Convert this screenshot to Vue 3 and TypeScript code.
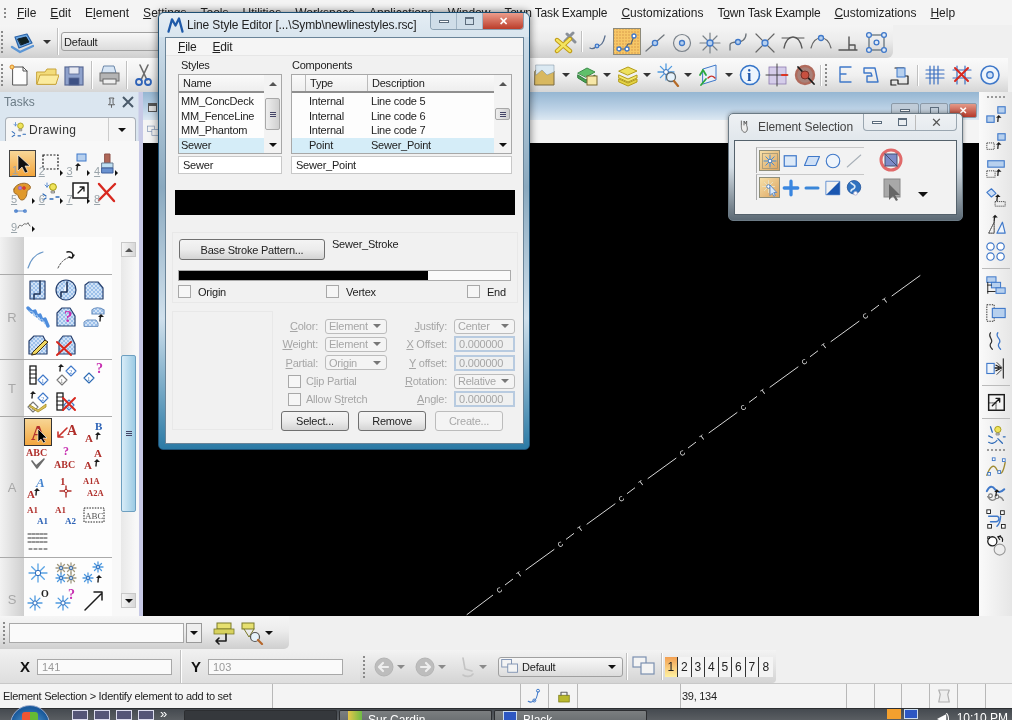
<script setup lang="ts">
type Tool = { i: string; sel?: boolean; arrow?: boolean; n?: number }

const BL = '#3f78c9'
const LB = '#b7d0ee'
const DK = '#1c1c1c'
const P = (d: string, c = BL, w = 1.3, f = 'none') => `<path d="${d}" fill="${f}" stroke="${c}" stroke-width="${w}" stroke-linejoin="round" stroke-linecap="round"/>`
const C = (x: number, y: number, r: number, c = BL, f = 'none', w = 1.3) => `<circle cx="${x}" cy="${y}" r="${r}" fill="${f}" stroke="${c}" stroke-width="${w}"/>`
const R = (x: number, y: number, w: number, h: number, c = BL, f = 'none', sw = 1.2, dash = '') => `<rect x="${x}" y="${y}" width="${w}" height="${h}" fill="${f}" stroke="${c}" stroke-width="${sw}" stroke-dasharray="${dash}"/>`
const T = (x: number, y: number, s: string, size = 10, c = '#b0302c', weight = 'bold') => `<text x="${x}" y="${y}" font-family="Liberation Serif, serif" font-size="${size}" font-weight="${weight}" fill="${c}">${s}</text>`
const UP = (x: number, y: number) => P(`M${x} ${y + 6}c0-3 0-4 1-5`, DK, 1.4) + `<path d="M${x - 2} ${y + 2}l3-3 3 3z" fill="${DK}"/>`
const STAR = (x: number, y: number, r: number, c = '#4f9ae0') => {
  const a = r * 0.7
  return P(`M${x - r} ${y}H${x + r}M${x} ${y - r}V${y + r}M${x - a} ${y - a}L${x + a} ${y + a}M${x - a} ${y + a}L${x + a} ${y - a}`, c, 1.3) + C(x, y, r * 0.3, '#2d6ab8', '#fff', 1)
}
const HDEF = '<defs><pattern id="hx" width="4" height="4" patternUnits="userSpaceOnUse"><rect width="4" height="4" fill="#9cc0ea"/><path d="M0 0l4 4M4 0L0 4" stroke="#e8f1fb" stroke-width=".7"/></pattern></defs>'
const HATCH = (d: string, c = '#27406e') => HDEF + P(d, c, 1.2, 'url(#hx)')
const XR = (x: number, y: number, s: number) => P(`M${x} ${y}l${s} ${s}M${x + s} ${y}l${-s} ${s}`, '#d8281f', 2)
const BULB = (x: number, y: number) => C(x, y, 3.4, '#a59a14', '#efe35a', 1) + P(`M${x - 1.5} ${y + 4}h3v2h-3z`, '#777', 0.8, '#ccc')
const TAG = (x: number, y: number, s: string, c = '#777') => P(`M${x} ${y}l5-5 5 5-5 5z`, c, 1.1, '#fff') + T(x + 3.2, y + 3, s, 6, c, 'normal')
const DASHED = (p: string, d: string) => p.replace('/>', ` stroke-dasharray="${d}"/>`)

const I: Record<string, string> = {
  monitor: P('M5 7l12-3 5 9-13 5z', '#2b63a8', 1.2, '#6ba7e0') + P('M8 9l8-2 3 5-8 3z', '#0f1d2c', 1, '#122') + P('M2 17l8 5 13-6', '#5d97d6', 2.4),
  newdoc: P('M6 4h10l4 4v14H6z', '#555', 1, '#fdfdfd') + P('M16 4v4h4', '#555', 1) + C(5, 4, 2, '#e08b2a', '#f8d06a', 1),
  folder: P('M2 9h8l2-3h9v15H2z', '#c8a43c', 1, '#f3dc7a') + P('M2 21l3-9h19l-3 9z', '#c8a43c', 1, '#fbeb9e'),
  save: R(3, 4, 18, 18, '#5a6a95', '#8fa2cc', 1.2) + R(7, 4, 10, 7, '#5a6a95', '#e8eaf2', 0.8) + R(7, 15, 10, 7, '#5a6a95', '#3e5184', 0.8),
  print: P('M7 3h10l2 7H5z', '#6a86a8', 1, '#d7e5f4') + R(3, 10, 19, 8, '#707070', '#b4b4b4', 1) + R(6, 16, 13, 5, '#666', '#eee', 1),
  scissors: P('M8 2l7 15M16 2L9 17', '#6a6a6a', 1.6) + C(7, 19, 3, '#2f63b8', 'none', 1.8) + C(16, 19, 3, '#2f63b8', 'none', 1.8),
  yx: P('M14 4l8 8M20 3l-8 8', '#8a9098', 3) + P('M4 10l13 11M17 9L4 21', '#c09a14', 4.4) + P('M4 10l13 11M17 9L4 21', '#f4e45e', 2.4),
  s1: P('M3 18c3 2 5 0 7-2 3 0 6-1 8-10', '#5a6f8e') + C(10, 16, 1.8, BL, LB),
  s2: P('M4 19h6l3-5h3l3-8', '#55606c', 1.2) + C(4, 19, 2, BL, '#fff') + C(12, 19, 2, BL, '#fff') + C(19, 6, 2, BL, '#fff'),
  s3: P('M3 21L21 5', '#70767c', 1.3) + C(12, 13, 2.6, BL, LB),
  s4: C(12, 13, 8.5, '#7b838b', 'none', 1.2) + C(12, 13, 2.5, BL, LB),
  s5: P('M12 3v20M2 13h20M5 6l14 14M5 20L19 6', '#7a8288', 1.2) + C(12, 13, 3, BL, LB),
  s6: P('M4 20v-5c0-3 5-3 8-3s8-2 8-8', '#6d747a', 1.3) + C(12, 12, 2.5, BL, LB),
  s7: P('M3 4l18 18M21 4L3 22', '#666', 1.2) + C(12, 13, 3, BL, LB),
  s8: P('M3 18c2-9 5-11 9-11s7 2 9 11', '#555', 1.3) + P('M1 8h8', '#555', 1) + P('M15 8h8', '#555', 1),
  s9: P('M2 18c2-8 6-10 10-10s8 2 10 10', '#666', 1.2) + C(12, 8, 2.5, BL, LB),
  s10: P('M3 20h18M13 20V7M13 15h6v5', '#555', 1.4),
  s11: R(5, 5, 15, 15, '#5a6a75', 'none', 1.2) + C(5, 5, 2.4, BL, '#dfeaf8') + C(20, 5, 2.4, BL, '#dfeaf8') + C(5, 20, 2.4, BL, '#dfeaf8') + C(20, 20, 2.4, BL, '#dfeaf8') + C(12.5, 12.5, 2.4, BL, '#dfeaf8'),
  map: P('M1 8c4-5 14-5 19 0v14H1z', '#7a6a40', 1, '#d8b860') + P('M2 12l6-5 5 5 7-3V2H2z', '#789', 0.5, '#dbe9f2'),
  lvl: P('M3 10l9-5 8 4-9 5z', '#3d8c4a', 1, '#5fc06a') + P('M3 12l8 5 9-5v3l-9 5-8-5z', '#2e7a3c', 1, '#46a050') + R(12, 13, 10, 9, '#7a6a30', '#f6e7a8', 1),
  layers: P('M3 8l9-4 9 4-9 4z', '#b49c16', 1, '#eee05c') + P('M3 12l9 4 9-4v3l-9 4-9-4z', '#b49c16', 1, '#f3e76c') + P('M3 16l9 4 9-4v3l-9 4-9-4z', '#b49c16', 1, '#e3d244'),
  find: STAR(10, 9, 8) + C(15, 14, 4.5, '#5d6a72', '#e6f2fb', 1.3) + P('M18 18l4 5', '#b56a28', 2.2),
  refm: P('M6 6l13-4v15L6 21z', '#3f78c9', 1, '#e9f1fa') + P('M3 12l3-5 3 5M4 22l5-6', '#2ba83f', 1.8) + P('M11 15c3-3 5-2 7 0', '#c8322c', 1.5),
  info: C(12, 12, 9.5, '#3474c8', '#eef5fd', 1.6) + T(9, 18, 'i', 16, '#1f57ab', 'bold'),
  plus: R(4, 4, 17, 17, '#8d7ab0', '#d5cdea', 0.8) + P('M12 1v22M1 12h22', '#333', 0.9, 'none') + P('M17 12h5', '#d32', 2),
  noc: C(12, 12, 9, '#b06a5c', '#a88078', 2.4) + P('M5 4l16 17', DK, 1.8) + C(12, 12, 4, '#7a3028', '#c85040', 1),
  w1: P('M7 4h11M7 4v7h6M7 11v8h11', '#3f78c9', 1.4),
  w2: P('M4 5h11l3 14H7v-6h5l-1-3H4z', '#3f78c9', 1.4),
  w3: P('M7 5h9v8h4v8H10v-4H3v5h5', DK, 1.2) + R(9, 5, 8, 9, BL, LB, 1),
  grid: P('M7 3v18M15 3v18M3 7h18M3 15h18M11 3v18M3 11h18', '#3a6fc0', 1.2),
  gridx: P('M7 3v18M15 3v18M3 7h18M3 15h18', '#3a6fc0', 1.2) + XR(5, 5, 13),
  ring: C(12, 12, 9, BL, '#eef4fb', 1.6) + C(12, 12, 3.2, BL, '#cfe0f6', 1.4),
  arrowS: `<path d="M7 3v16l4-4 3 6 3-1-3-6h5z" fill="#111" stroke="#fff" stroke-width=".6"/>`,
  dash: R(5, 3, 15, 14, DK, 'none', 1.2, '2 1.5'),
  t3: R(11, 2, 9, 7, BL, LB, 1) + UP(11, 12),
  t4: P('M11 2h5v9h-5z', '#8d5048', 1, '#b06858') + P('M8 11h11v5H8z', '#6b7d92', 1, '#bfe0f3') + P('M8 16h11v5H8z', '#3c5e9c', 1, '#6a92d0'),
  t5: P('M3 9c2-6 13-8 16-3 2 4-3 3-3 6 0 4-2 8-5 8-4 0-3-6-6-6-1 0-3-2-2-5z', '#9c6a2a', 1, '#e0992c') + C(9, 8, 1.8, '#8a5ac0', '#b07fe0', 0.6) + C(13, 8, 1.5, '#c8322c', '#e0402f', 0.6),
  t6: BULB(15, 7) + P('M9 3v4M9 7l-2-2M9 7l2-2', '#5b8cd0', 1) + P('M5 14l3 2M5 20l3-2M18 17h3M12 19h3', '#2f6bb8', 1.3, 'none'),
  t7: R(7, 3, 15, 15, DK, '#fff', 1.5) + P('M12 13l6-6M14 7h4v4', DK, 1.3),
  redx: P('M5 4l15 17M21 4L5 20', '#d8281f', 2.4),
  t9: P('M5 3h8', '#5a8cd0', 1, 'none') + C(5, 3, 1.2) + C(14, 3, 1.2) + P('M7 20c2-6 3 0 5-3s3 1 5-2M17 15l2 3', '#666', 1),
  c1: P('M2 20C5 10 10 6 17 4', '#6a98c8', 1.2),
  c2: DASHED(P('M4 20c3-6 6-9 12-11', '#555', 1, 'none'), '2 1.5') + P('M13 4c5-1 7 2 5 6M18 10l-3-1M18 10l2-3', DK, 1.4),
  r1: HATCH('M4 3h15v18H4z') + P('M14 3v13H8v5', '#1e3358', 1.5),
  r2: HDEF + C(12, 12, 10, '#27406e', 'url(#hx)', 1.2) + P('M13 4v10H7v5', '#1e3358', 1.6, '#f4f8fd'),
  r3: HATCH('M3 21V7l4-3h9l5 6v11z'),
  r4: P('M2 3l4 4 3-1 2 5 3-1 2 5 3-1 3 7', '#4e8ddd', 3.3) + P('M3 6l4 1 1 4 3-1 2 5 3-1 3 5', '#9dc4ef', 1),
  r5: HATCH('M3 21V8l5-5h8l5 8v10z') + T(10, 17, '?', 17, '#c72fb1'),
  r6: HATCH('M10 5c2-3 8-3 12 0v4H10z', '#6a90c0') + P('M2 21v-4l3-2h9l2 3v3z', '#6a90c0', 1, 'url(#hx)') + UP(18, 10),
  r7: HATCH('M3 21V8l5-5h9l4 8v10z') + P('M7 19l12-12 3 2-12 12-4 1z', '#3b2a10', 1, '#f0d860'),
  r8: HATCH('M5 21V8l4-5h8l4 8v10z') + P('M3 9l14 13M17 9L3 22', '#d8281f', 2),
  d1: R(4, 3, 6, 18, DK, '#fff', 1.3) + P('M4 7h6M4 11h6M4 15h6', DK, 1) + TAG(12, 17, '1', '#3f78c9'),
  d2: TAG(3, 17, '1') + TAG(12, 8, '2', '#3f78c9') + UP(6, 2),
  d3: TAG(2, 15, '1', '#2c6ab3') + T(14, 10, '?', 14, '#c72fb1'),
  d4: TAG(2, 17, '1') + TAG(12, 8, '2', '#3f78c9') + P('M4 15l8 5 8-6v3l-8 5-8-5z', '#a08a20', 0.8, '#e0c25a') + UP(6, 2),
  d5: R(3, 3, 6, 17, DK, '#fff', 1.3) + P('M3 7h6M3 11h6M3 15h6', DK, 1) + TAG(10, 15, '1', '#3f78c9') + XR(9, 8, 12),
  a1: T(5, 20, 'A', 20, '#b0302c') + `<path d="M12 9v13l3-3 2.5 4 2-1-2.5-4h4z" fill="#000" stroke="#fff" stroke-width=".6"/>`,
  a2: P('M13 8l-9 9M4 12v5h5', '#c8322c', 1.6) + T(13, 15, 'A', 14),
  a3: T(3, 22, 'A', 11) + T(13, 10, 'B', 11, '#2c62b6') + UP(15, 13),
  a4: T(0, 9, 'ABC', 10) + P('M6 14l4 5 8-7-7 9z', '#6c6c6c', 1.6, '#888'),
  a5: T(9, 8, '?', 12, '#c72fb1') + T(0, 21, 'ABC', 10),
  a6: T(2, 22, 'A', 11) + T(12, 10, 'A', 11) + UP(14, 13),
  a7: T(1, 23, 'A', 11) + `<text x="10" y="12" font-family="Liberation Serif, serif" font-size="13" font-style="italic" font-weight="bold" fill="#4584cf">A</text>` + UP(10, 14),
  a8: T(6, 10, '1', 11) + P('M12 11v11M6 16h11', '#b0302c', 1.4) + C(12, 16, 1.6, '#b0302c', '#fff', 1),
  a9: T(1, 9, 'A1A', 8.5) + T(5, 21, 'A2A', 8.5),
  a10: T(1, 10, 'A1', 9) + T(11, 21, 'A1', 9, '#2c62b6'),
  a11: T(1, 10, 'A1', 9) + T(11, 21, 'A2', 9, '#2c62b6'),
  a12: R(2, 5, 20, 14, DK, 'none', 1, '1.5 1.2') + T(3, 16, 'ABC', 9, '#555', 'normal'),
  a13: DASHED(P('M2 4h20M2 8h20M2 12h20', '#333', 1), '3 1') + DASHED(P('M3 19h18', '#333', 1), '3 2'),
  e1: STAR(12, 12, 9, '#59a3e4'),
  e2: STAR(7, 7, 5, '#a39a80') + STAR(17, 7, 5, '#a39a80') + STAR(7, 17, 5, '#4f9ae0') + STAR(17, 17, 5, '#a09a80'),
  e3: STAR(16, 6, 5) + STAR(6, 17, 5) + UP(16, 15),
  e4: STAR(9, 15, 7) + T(15, 9, 'O', 10, '#222'),
  e5: STAR(9, 15, 7) + T(14, 11, '?', 14, '#c72fb1'),
  e6: P('M3 22L19 6M12 4h8v8', DK, 1.5),
  cm1: R(14, 3, 8, 7, BL, LB, 1.2) + R(2, 13, 8, 7, BL, LB, 1.2) + UP(14, 13),
  cm2: R(14, 3, 8, 7, BL, LB, 1.2) + R(2, 13, 8, 7, DK, 'none', 0.9, '1.2 1') + UP(14, 13),
  cm3: R(3, 3, 18, 7, BL, LB, 1.2) + R(2, 14, 9, 7, DK, 'none', 0.9, '1.2 1') + UP(14, 13),
  cm4: P('M2 7l5-4 5 5-5 4z', BL, 1.2, '#cfe0f6') + UP(13, 10) + R(11, 17, 11, 5, DK, 'none', 0.9, '1.2 1'),
  cm5: DASHED(P('M4 22l6-12v12z', DK, 0.9), '1.5 1') + P('M13 22l6-12 3 12z', BL, 1.3, '#eef4fb') + UP(10, 3),
  cm6: C(6, 6, 4, BL, '#fff') + C(17, 6, 4, BL, '#fff') + C(6, 17, 4, BL, '#fff') + C(17, 17, 4, BL, '#fff'),
  cm7: R(2, 2, 10, 6, BL, LB, 1.1) + R(7, 8, 10, 6, BL, LB, 1.1) + R(12, 14, 10, 6, BL, LB, 1.1) + P('M3 11h4M3 18h8M3 8v12', DK, 1),
  cm8: R(2, 3, 8, 18, DK, 'none', 1, '1.5 1.2') + R(8, 7, 14, 10, BL, LB, 1.2),
  cm9: P('M6 3c-4 5 5 7 0 12-1 2 0 4 2 6', '#333', 1.3) + P('M14 3c-4 5 6 7 1 12-1 2 0 4 2 6', BL, 1.4),
  cm10: R(2, 7, 8, 11, BL, '#eef4fb', 1.2) + P('M20 2v21', '#333', 1.3) + P('M11 12h4M12 9l6 3-6 3', DK, 1.4) + P('M13 6l5 5M13 19l5-5', '#333', 1),
  cm11: R(4, 4, 17, 17, DK, '#f4f4f4', 1.6) + P('M8 16l7-7M12 8h4v4', DK, 1.5) + DASHED(P('M4 13h8v8', DK, 0.8), '1 1'),
  cm12: BULB(14, 6) + P('M6 3l2 6M4 13l4 2M4 20c3 2 7 1 9-2M14 16l5 5M20 14h2', '#2f6bb8', 1.4),
  cm13: P('M2 21c3-8 7-14 11-6s7 3 9-8', '#a08a30', 1.5) + R(3, 18, 3, 3, BL, '#fff', 1) + R(8, 2, 3, 3, BL, '#fff', 1) + R(14, 16, 3, 3, BL, '#fff', 1) + R(19, 3, 3, 3, BL, '#fff', 1),
  cm14: P('M2 10c3-6 6-6 9-2s6 4 10 0', BL, 2.2) + P('M3 16c3 5 6 5 9 2s6-2 8 2', '#888', 1.6) + C(6, 15, 2, '#777', '#fff') + C(13, 16, 2, '#777', '#fff') + UP(12, 9),
  cm15: R(2, 2, 4, 4, DK, '#fff', 1) + R(17, 3, 4, 4, DK, '#fff', 1) + R(3, 18, 4, 4, DK, '#fff', 1) + R(18, 18, 4, 4, DK, '#fff', 1) + P('M4 9h9c3 0 3 6-1 6H6M17 9c0 4-2 9-4 11', BL, 1.5),
  cm16: C(8, 8, 5, DK, '#fff', 1.4) + C(16, 17, 6, '#999', '#ededed', 1.2) + P('M14 3c4-1 6 2 5 5M14 3l3-1M14 3l2 3', DK, 1.3) + R(3, 3, 2, 2, DK, '#fff', 1),
  fence: R(5, 2, 14, 6, '#7a7a28', '#e6e070', 1) + R(2, 8, 20, 5, '#7a7a28', '#d8d25e', 0.8) + P('M4 20h10M4 20l3-3M4 20l3 3M14 13v7', DK, 1.6),
  fenceq: R(2, 2, 12, 6, '#7a7a28', '#e6e070', 1) + P('M4 8l5 8 5-8', '#7a7a28', 1) + C(15, 16, 4.5, '#555', '#e6f2fb', 1.2) + P('M18 19l4 4', '#b5662a', 2.2),
  back: C(12, 12, 9, '#b4b4b4', '#bdbdbd', 1) + P('M16 12H8M11 8l-4 4 4 4', '#eee', 2.2),
  fwd: C(12, 12, 9, '#b4b4b4', '#bdbdbd', 1) + P('M8 12h8M13 8l4 4-4 4', '#eee', 2.2),
  cam: P('M9 3l2 11M9 20c3 2 8 2 10-1M11 14l7 2', '#c4c4c4', 1.6),
  views: R(1, 2, 13, 10, '#7b8fb0', '#f4f4f4', 1.2) + R(9, 8, 13, 11, '#7b8fb0', '#f4f4f4', 1.2),
  sel1: R(2, 2, 20, 20, '#9c9274', 'none', 1) + STAR(12, 12, 8, '#3f8bdc'),
  rect: R(3, 5, 16, 14, BL, '#dce9f8', 1.6),
  para: P('M7 6h15l-5 12H2z', BL, 1.5, '#cfe0f6'),
  circ: C(12, 12, 9, BL, '#eef4fb', 1.5),
  ln: P('M3 20L21 4', '#a8b0b8', 1.4),
  sel2: STAR(10, 10, 8, '#e8e0c0') + `<path d="M12 8v14l3-3 2 4 2-1-2-4h4z" fill="#dcebfa" stroke="#3f78c9"/>`,
  pl: P('M12 3v18M3 12h18', '#3a86e0', 4.4),
  mi: P('M4 12h16', '#3a86d8', 4),
  half: P('M3 3h18v18H3z', BL, 1) + `<path d="M21 3v18H3z" fill="#1a56b0"/>`,
  globe: C(12, 11, 9, '#1f4f96', '#2f72c0', 1) + P('M8 5c2 3 6 2 5 6s-4 1-5 5', '#d8e8f6', 2.2) + C(14, 19, 2.5, '#aac', '#fff', 1),
  nosel: C(12, 12, 10, '#e06a6a', 'none', 3) + R(6, 6, 12, 12, '#454e70', '#7d8cc8', 1) + P('M6 6l12 12', '#454e70', 1),
  grey: R(5, 1, 16, 18, '#888', '#a8a8a8', 1) + `<path d="M10 6v16l4-4 3 5 2-1-3-5h5z" fill="#666"/>`,
  wrench: P('M8 3v7c0 3 0 9 5 10 4 0 5-6 3-10V3l-2 4-2-4v6', '#555', 1.3, '#eee'),
  ms: P('M4 19l4-14 4 7 4-8 4 15', '#1f5aa8', 2.6),
  lockp: R(5, 11, 14, 9, '#7a7a10', '#b9b82e', 1) + P('M8 11V7h8v4', '#666', 1.6),
  snapst: P('M3 19c3 2 6 1 8-1 3-1 4-6 5-12', BL, 1.4) + C(11, 18, 2, BL) + C(16, 5, 2, BL),
  mapd: P('M5 4h14l-2 6 2 10H5l2-10z', '#b0b0b0', 1.6, '#eee'),
}

const row1Right: Tool[] = [
  { i: 'yx' }, { i: 's1' }, { i: 's2', sel: true }, { i: 's3' }, { i: 's4' }, { i: 's5' }, { i: 's6' }, { i: 's7' }, { i: 's8' }, { i: 's9' }, { i: 's10' }, { i: 's11' },
]
const row2Left: Tool[] = [{ i: 'newdoc' }, { i: 'folder' }, { i: 'save' }, { i: 'print' }, { i: 'scissors' }]
const row2A: Tool[] = [
  { i: 'map', arrow: true }, { i: 'lvl', arrow: true }, { i: 'layers', arrow: true }, { i: 'find', arrow: true }, { i: 'refm', arrow: true },
  { i: 'info' }, { i: 'plus' }, { i: 'noc' },
]
const row2B = ['w1', 'w2', 'w3']
const row2C = ['grid', 'gridx', 'ring']

const topTools: Tool[] = [
  { i: 'arrowS', n: 1, sel: true }, { i: 'dash', n: 2, arrow: true }, { i: 't3', n: 3, arrow: true }, { i: 't4', n: 4, arrow: true },
  { i: 't5', n: 5, arrow: true }, { i: 't6', n: 6, arrow: true }, { i: 't7', n: 7, arrow: true }, { i: 'redx', n: 8 },
  { i: 't9', n: 9, arrow: true },
]
const sections = [
  { k: 'first', l: '', items: ['c1', 'c2'] },
  { k: 'r', l: 'R', items: ['r1', 'r2', 'r3', 'r4', 'r5', 'r6', 'r7', 'r8'] },
  { k: 't', l: 'T', items: ['d1', 'd2', 'd3', 'd4', 'd5'] },
  { k: 'a', l: 'A', items: ['a1', 'a2', 'a3', 'a4', 'a5', 'a6', 'a7', 'a8', 'a9', 'a10', 'a11', 'a12', 'a13'] },
  { k: 's', l: 'S', items: ['e1', 'e2', 'e3', 'e4', 'e5', 'e6'] },
]
const rightA = ['cm1', 'cm2', 'cm3', 'cm4', 'cm5', 'cm6']
const rightB = ['cm7', 'cm8', 'cm9', 'cm10']
const rightC = ['cm13', 'cm14', 'cm15', 'cm16']

const styleRows = ['MM_ConcDeck', 'MM_FenceLine', 'MM_Phantom', 'Sewer']
const compRows = [
  ['Internal', 'Line code 5'], ['Internal', 'Line code 6'], ['Internal', 'Line code 7'], ['Point', 'Sewer_Point'],
]
const pages = [1, 2, 3, 4, 5, 6, 7, 8]

const ANGLE = -37.3
const DX = 61
const DY = 45.65
const line = Array.from({ length: 7 }, (_, i) => ({
  i,
  dash: { x1: 505 + DX * i, y1: 585 - DY * i, x2: 513 + DX * i, y2: 579 - DY * i },
  seg: { x1: 525.7 + DX * i, y1: 570 - DY * i, x2: 554.3 + DX * i, y2: 549.3 - DY * i },
  cx: 499.3 + DX * i,
  cy: 590 - DY * i,
  tx: 519.3 + DX * i,
  ty: 574.3 - DY * i,
}))
</script>

<template>
  <div class="app">
    <nav class="menubar">
      <span class="grip short" />
      <span class="mi m-a"><u>F</u>ile</span>
      <span class="mi"><u>E</u>dit</span>
      <span class="mi">E<u>l</u>ement</span>
      <span class="mi"><u>S</u>ettings</span>
      <span class="mi"><u>T</u>ools</span>
      <span class="mi"><u>U</u>tilities</span>
      <span class="mi"><u>W</u>orkspace</span>
      <span class="mi"><u>A</u>pplications</span>
      <span class="mi"><u>W</u>indow</span>
      <span class="mi town">T<u>o</u>wn Task Example</span>
      <span class="mi"><u>C</u>ustomizations</span>
      <span class="mi town">T<u>o</u>wn Task Example</span>
      <span class="mi"><u>C</u>ustomizations</span>
      <span class="mi"><u>H</u>elp</span>
    </nav>

    <div class="bar bar1">
      <span class="grip" />
      <svg class="ic big" viewBox="0 0 24 24" v-html="I.monitor" />
      <span class="tri tri-l" />
      <span class="sep sep-l" />
      <div class="combo wide">Default</div>
      <div class="bar-right">
        <template v-for="(t, idx) in row1Right" :key="t.i">
          <span v-if="idx === 1" class="sep" />
          <span class="cell" :class="{ sel: t.sel }"><svg class="ic" viewBox="0 0 24 24" v-html="I[t.i]" /></span>
        </template>
      </div>
    </div>

    <div class="bar bar2">
      <span class="grip" />
      <template v-for="(t, idx) in row2Left" :key="t.i">
        <span v-if="idx === 3 || idx === 4" class="sep" />
        <span class="cell"><svg class="ic" viewBox="0 0 24 24" v-html="I[t.i]" /></span>
      </template>
      <div class="bar-right r2">
        <template v-for="t in row2A" :key="t.i">
          <span class="cell"><svg class="ic" viewBox="0 0 24 24" v-html="I[t.i]" /></span>
          <span v-if="t.arrow" class="tri" />
        </template>
        <span class="sep gapl" />
        <span class="grip" />
        <span v-for="n in row2B" :key="n" class="cell"><svg class="ic" viewBox="0 0 24 24" v-html="I[n]" /></span>
        <span class="sep" />
        <span v-for="n in row2C" :key="n" class="cell"><svg class="ic" viewBox="0 0 24 24" v-html="I[n]" /></span>
      </div>
    </div>

    <main class="middle">
      <aside class="tasks">
        <header class="tasks-head">
          <span>Tasks</span>
          <span class="pin">
            <svg viewBox="0 0 12 14" class="pin-ic"><path d="M3 1h6v1H8v6l2 2H2l2-2V2H3zM6 10v4" fill="none" stroke="#555" stroke-width="1.2" /></svg>
            <svg viewBox="0 0 12 12" class="pin-ic x"><path d="M1 1l10 10M11 1L1 11" stroke="#4a5a6a" stroke-width="2" /></svg>
          </span>
        </header>
        <div class="task-tab">
          <svg class="ic sm" viewBox="0 0 24 24" v-html="I.t6" />
          <span class="tab-label">Drawing</span>
          <span class="tab-drop"><span class="tri dark" /></span>
        </div>
        <div class="task-body">
          <div class="top-grid">
            <span v-for="t in topTools" :key="t.n" class="tcell" :class="{ tsel: t.sel }">
              <svg class="ic" viewBox="0 0 24 24" v-html="I[t.i]" />
              <span class="num">{{ t.n }}</span>
              <span v-if="t.arrow" class="corner" />
            </span>
          </div>
          <div class="scroll-wrap">
            <div class="sections">
              <section v-for="s in sections" :key="s.k" class="sec" :class="'sec-' + s.k">
                <span class="letter">{{ s.l }}</span>
                <div class="sec-grid">
                  <span v-for="n in s.items" :key="n" class="scell" :class="{ scur: n === 'a1' }"><svg class="ic" viewBox="0 0 24 24" v-html="I[n]" /></span>
                </div>
              </section>
            </div>
            <div class="vscroll">
              <span class="sb-btn"><span class="tri up" /></span>
              <span class="sb-track"><span class="sb-thumb"><i /><i /><i /></span></span>
              <span class="sb-btn"><span class="tri dark" /></span>
            </div>
          </div>
        </div>
      </aside>

      <section class="view">
        <div class="view-title">
          <span class="doc-ic" />
          <span class="win-btns">
            <span class="wb"><span class="wmin" /></span>
            <span class="wb"><span class="wrest" /></span>
            <span class="wb closer">✕</span>
          </span>
        </div>
        <div class="view-band"><svg class="band-ic" viewBox="0 0 24 24" v-html="I.views" /></div>
        <div class="canvas">
          <svg class="cad" viewBox="143 143 836 473" width="836" height="473">
            <g stroke="#eee" stroke-width="0.9">
              <line x1="466.7" y1="614.8" x2="493" y2="595" />
              <template v-for="s in line" :key="s.i">
                <line v-bind="s.dash" />
                <line v-bind="s.seg" />
              </template>
            </g>
            <g fill="#eee" font-family="Liberation Sans, sans-serif" font-size="7">
              <template v-for="s in line" :key="s.i">
                <text :x="s.cx" :y="s.cy + 2.5" text-anchor="middle" :transform="`rotate(${ANGLE} ${s.cx} ${s.cy})`">C</text>
                <text :x="s.tx" :y="s.ty + 2.5" text-anchor="middle" :transform="`rotate(${ANGLE} ${s.tx} ${s.ty})`">T</text>
              </template>
            </g>
          </svg>
        </div>

        <div class="es-win">
          <div class="es-title">
            <svg class="ic es-ic" viewBox="0 0 24 24" v-html="I.wrench" />
            <span class="es-name">Element Selection</span>
            <span class="es-btns"><b class="wmin" /><b class="wrest small" /><em>✕</em></span>
          </div>
          <div class="es-body">
            <div class="es-rows">
              <div class="es-row">
                <span class="cell es sel"><svg class="ic" viewBox="0 0 24 24" v-html="I.sel1" /></span>
                <span v-for="n in ['rect', 'para', 'circ', 'ln']" :key="n" class="cell es"><svg class="ic" viewBox="0 0 24 24" v-html="I[n]" /></span>
              </div>
              <div class="es-row">
                <span class="cell es sel"><svg class="ic" viewBox="0 0 24 24" v-html="I.sel2" /></span>
                <span v-for="n in ['pl', 'mi', 'half', 'globe']" :key="n" class="cell es"><svg class="ic" viewBox="0 0 24 24" v-html="I[n]" /></span>
              </div>
            </div>
            <div class="es-side">
              <svg class="ic" viewBox="0 0 24 24" v-html="I.nosel" />
              <svg class="ic" viewBox="0 0 24 24" v-html="I.grey" />
            </div>
            <span class="tri dark es-tri" />
          </div>
        </div>
      </section>

      <aside class="rightbar">
        <span class="hgrip" />
        <span v-for="n in rightA" :key="n" class="rcell"><svg class="ic" viewBox="0 0 24 24" v-html="I[n]" /></span>
        <span class="hsep" />
        <span v-for="n in rightB" :key="n" class="rcell"><svg class="ic" viewBox="0 0 24 24" v-html="I[n]" /></span>
        <span class="hsep" />
        <span class="rcell c"><svg class="ic" viewBox="0 0 24 24" v-html="I.cm11" /></span>
        <span class="hsep" />
        <span class="rcell c"><svg class="ic" viewBox="0 0 24 24" v-html="I.cm12" /></span>
        <span class="hgrip" />
        <span v-for="n in rightC" :key="n" class="rcell c"><svg class="ic" viewBox="0 0 24 24" v-html="I[n]" /></span>
      </aside>
    </main>

    <div class="lower">
      <div class="bar keyin">
        <span class="grip" />
        <div class="field key" />
        <span class="drop"><span class="tri dark" /></span>
        <span class="cell"><svg class="ic" viewBox="0 0 24 24" v-html="I.fence" /></span>
        <span class="cell"><svg class="ic" viewBox="0 0 24 24" v-html="I.fenceq" /></span>
        <span class="tri dark" />
      </div>
    </div>

    <div class="coords">
      <div class="xy">
        <b>X</b><div class="field co">141</div>
        <span class="sep tall" />
        <b class="yl">Y</b><div class="field co">103</div>
      </div>
      <div class="bar navs">
        <span class="grip" />
        <span class="cell narrow"><svg class="ic" viewBox="0 0 24 24" v-html="I.back" /></span><span class="tri pale" />
        <span class="cell narrow"><svg class="ic" viewBox="0 0 24 24" v-html="I.fwd" /></span><span class="tri pale" />
        <span class="cell narrow"><svg class="ic" viewBox="0 0 24 24" v-html="I.cam" /></span><span class="tri pale" />
        <div class="combo vw">
          <svg class="ic tiny" viewBox="0 0 24 24" v-html="I.views" />
          <span>Default</span>
          <span class="tri dark end" />
        </div>
        <span class="sep" />
        <span class="cell"><svg class="ic" viewBox="0 0 24 24" v-html="I.views" /></span>
        <span class="sep" />
        <span class="pages"><span v-for="p in pages" :key="p" class="pg" :class="{ on: p === 1 }">{{ p }}</span></span>
      </div>
    </div>

    <footer class="status">
      <span class="st msg">Element Selection &gt; Identify element to add to set</span>
      <span class="st w248" />
      <span class="st w28"><svg class="ic xs" viewBox="0 0 24 24" v-html="I.snapst" /></span>
      <span class="st w29"><svg class="ic xs" viewBox="0 0 24 24" v-html="I.lockp" /></span>
      <span class="st w103" />
      <span class="st w166">39, 134</span>
      <span class="st w28" /><span class="st w27" /><span class="st w28" />
      <span class="st w28"><svg class="ic xs" viewBox="0 0 24 24" v-html="I.mapd" /></span>
      <span class="st w28" /><span class="st w27" />
    </footer>

    <div class="taskbar">
      <span class="orb"><span class="flag" /></span>
      <span class="ql" />
      <span class="ql" />
      <span class="ql" />
      <span class="ql" />
      <span class="chev">»</span>
      <span class="tb dark" />
      <span class="tb"><span class="tb-ic green" />Sur Cardin</span>
      <span class="tb"><span class="tb-ic blue" />Black</span>
      <span class="tray"><span class="tb-ic orange" /><span class="tb-ic blue" /><span class="vol">◀)</span><span>10:10 PM</span></span>
    </div>

    <div class="lse">
      <div class="lse-title">
        <svg class="ic logo" viewBox="0 0 24 24" v-html="I.ms" />
        <span class="lse-name">Line Style Editor [...\Symb\newlinestyles.rsc]</span>
        <span class="caption">
          <span class="cap"><span class="wmin" /></span>
          <span class="cap"><span class="wrest small" /></span>
          <span class="cap red">✕</span>
        </span>
      </div>
      <div class="lse-body">
        <div class="lse-menu"><span><u>F</u>ile</span><span><u>E</u>dit</span></div>

        <div class="lists">
          <div class="gcol styles">
            <span class="legend">Styles</span>
            <div class="listbox">
              <div class="lb-main">
                <div class="lb-head"><span class="h-name">Name</span></div>
                <div v-for="r in styleRows" :key="r" class="lb-row" :class="{ cur: r === 'Sewer' }">{{ r }}</div>
              </div>
              <div class="lb-sb">
                <span class="sb-btn s"><span class="tri up" /></span>
                <span class="sb-track s"><span class="sb-thumb gr"><i /><i /><i /></span></span>
                <span class="sb-btn s"><span class="tri dark" /></span>
              </div>
            </div>
            <div class="field tf">Sewer</div>
          </div>
          <div class="gcol comps">
            <span class="legend">Components</span>
            <div class="listbox">
              <div class="lb-main">
                <div class="lb-head cols"><span class="h0" /><span class="h1">Type</span><span class="h2">Description</span></div>
                <div v-for="r in compRows" :key="r[1]" class="lb-row cols" :class="{ cur: r[0] === 'Point' }"><span class="h0" /><span class="c1">{{ r[0] }}</span><span class="c2">{{ r[1] }}</span></div>
              </div>
              <div class="lb-sb">
                <span class="sb-btn s"><span class="tri up" /></span>
                <span class="sb-track s"><span class="sb-thumb gr small"><i /><i /><i /></span></span>
                <span class="sb-btn s"><span class="tri dark" /></span>
              </div>
            </div>
            <div class="field tf">Sewer_Point</div>
          </div>
        </div>

        <div class="preview" />

        <div class="stroke-box">
          <div class="stroke-top">
            <button class="btn base">Base Stroke Pattern...</button>
            <span class="stroke-name">Sewer_Stroke</span>
          </div>
          <div class="strokebar"><span class="strokefill" /></div>
          <div class="checks">
            <label class="chk"><i class="box" />Origin</label>
            <label class="chk"><i class="box" />Vertex</label>
            <label class="chk"><i class="box" />End</label>
          </div>
        </div>

        <div class="lower-form">
          <div class="thumb" />
          <div class="form-side">
            <div class="form">
              <span class="lab"><u>C</u>olor:</span><span class="sel-d">Element<i class="tri pale2" /></span>
              <span class="lab"><u>J</u>ustify:</span><span class="sel-d">Center<i class="tri pale2" /></span>
              <span class="lab"><u>W</u>eight:</span><span class="sel-d">Element<i class="tri pale2" /></span>
              <span class="lab"><u>X</u> Offset:</span><span class="num-d">0.000000</span>
              <span class="lab"><u>P</u>artial:</span><span class="sel-d">Origin<i class="tri pale2" /></span>
              <span class="lab"><u>Y</u> offset:</span><span class="num-d">0.000000</span>
              <span class="lab-c"><i class="box" /><span>C<u>l</u>ip Partial</span></span>
              <span class="lab"><u>R</u>otation:</span><span class="sel-d">Relative<i class="tri pale2" /></span>
              <span class="lab-c"><i class="box" /><span>Allow S<u>t</u>retch</span></span>
              <span class="lab"><u>A</u>ngle:</span><span class="num-d">0.000000</span>
            </div>
            <div class="actions">
              <button class="btn">Select...</button>
              <button class="btn">Remove</button>
              <button class="btn off">Create...</button>
            </div>
          </div>
        </div>
      </div>
    </div>
  </div>
</template>

<style>
html, body { margin: 0; background: #f0f0f0; }
</style>

<style scoped>
.app {
  position: relative;
  width: 1012px;
  height: 720px;
  overflow: hidden;
  display: flex;
  flex-direction: column;
  background: #f0f0f0;
  font-family: "Liberation Sans", Arial, sans-serif;
  font-size: 12px;
  color: #222;
  filter: blur(.35px);
}
u { text-decoration: underline; text-underline-offset: 1px; }
button { font: inherit; letter-spacing: inherit; }

.menubar { height: 25px; display: flex; align-items: center; background: #f4f4f4; padding-left: 3px; flex: none; }
.grip { width: 2px; height: 22px; margin: 0 4px 0 1px; flex: none; background: repeating-linear-gradient(#8a8a8a 0 2px, transparent 2px 4px); }
.grip.short { height: 10px; margin-right: 0; }
.mi { margin-right: 14px; white-space: nowrap; }
.mi.m-a { margin-left: 11px; }
.mi.town { letter-spacing: -.17px; }

.bar { display: flex; align-items: center; flex: none; background: linear-gradient(#f5f5f5 0, #ececec 45%, #cfcfcf 100%); }
.bar1 { height: 33px; width: 893px; border-radius: 0 0 6px 0; box-sizing: border-box; }
.bar2 { height: 34px; width: 1008px; box-sizing: border-box; background: linear-gradient(#fafafa 0, #f0f0f0 50%, #d6d6d6 100%); }
.bar2 > .grip { margin-right: 2px; }
.bar-right { margin-left: auto; display: flex; align-items: center; padding-right: 3px; }
.r2 { padding-right: 4px; }
.r2 .tri { margin: 0 3px 0 2px; }
.cell { width: 27.7px; height: 27px; display: flex; align-items: center; justify-content: center; flex: none; box-sizing: border-box; }
.cell.narrow { width: 24px; }
.cell.sel { background: radial-gradient(#f7c766 1px, #e6ae58 1.5px) 0 0 / 3px 3px; border: 1px solid #8d8a7a; }
.ic { width: 24px; height: 24px; display: block; flex: none; }
.ic.big { margin-left: 3px; }
.ic.sm { width: 20px; height: 20px; }
.ic.xs { width: 18px; height: 18px; }
.ic.tiny { width: 18px; height: 18px; }
.tri { display: inline-block; width: 0; height: 0; border: 4px solid transparent; border-top: 4px solid #333; border-bottom: 0; flex: none; }
.tri.dark { border-top-color: #111; }
.tri.up { border-top: 0; border-bottom: 4px solid #555; }
.tri.pale { border-top-color: #8a8a8a; margin: 0 8px 0 1px; }
.tri-l { margin-left: 9px; }
.sep { width: 1px; align-self: stretch; margin: 3px 3px; background: #c0c0c0; flex: none; box-shadow: 1px 0 0 #fff; }
.sep-l { margin-left: 6px; margin-right: 3px; }
.sep.tall { margin: 0 0 0 8px; }
.sep.gapl { margin-left: 1px; }
.combo { border: 1px solid #a0a0a0; border-radius: 3px; background: linear-gradient(#f8f8f8, #dcdcdc); box-sizing: border-box; display: flex; align-items: center; padding-left: 2px; font-size: 11px; letter-spacing: -.2px; }
.combo.wide { width: 130px; height: 19px; }

.middle { flex: none; height: 524px; display: flex; position: relative; }
.tasks { width: 143px; flex: none; display: flex; flex-direction: column; background: linear-gradient(90deg, #dbe6f0 0, #dbe6f0 138px, #c7c9e6 139px); box-sizing: border-box; padding-right: 4px; }
.tasks-head { height: 20px; display: flex; align-items: center; justify-content: space-between; padding: 0 5px 0 4px; color: #6b7b85; }
.pin { display: flex; gap: 6px; align-items: center; }
.pin-ic { width: 9px; height: 11px; }
.pin-ic.x { width: 12px; height: 12px; }
.task-tab { margin: 5px 3px 0 5px; height: 23px; display: flex; align-items: center; border: 1px solid #a9b0b8; border-bottom: 0; border-radius: 4px 4px 0 0; background: #f6f6f6; padding-left: 2px; }
.tab-label { margin-left: 1px; color: #333; letter-spacing: .5px; flex: 1; }
.tab-drop { width: 26px; height: 100%; border-left: 1px solid #ccc; display: flex; align-items: center; justify-content: center; }
.task-body { flex: 1; min-height: 0; background: #f8f8f8; display: flex; flex-direction: column; }
.top-grid { display: grid; grid-template-columns: repeat(4, 27.7px); grid-auto-rows: 28px; padding: 9px 0 0 9px; height: 96px; box-sizing: border-box; flex: none; }
.tcell { position: relative; display: flex; align-items: center; justify-content: center; width: 27px; height: 27px; }
.tsel { background: linear-gradient(#f7d798, #f3a53c); border: 1px solid #444; box-sizing: border-box; }
.num { position: absolute; left: 2px; bottom: 0; color: #9aa4aa; font-size: 11px; text-decoration: underline; line-height: 12px; }
.corner { position: absolute; right: -2px; bottom: 1px; border: 3px solid transparent; border-left: 3px solid #111; }
.scroll-wrap { flex: 1; min-height: 0; display: flex; overflow: hidden; }
.sections { width: 112px; flex: none; overflow: hidden; }
.sec { display: flex; border-top: 1px solid #aaa; box-sizing: border-box; overflow: hidden; position: relative; }
.sec-first { border-top: 0; height: 37px; }
.sec-r { height: 85px; } .sec-t { height: 57px; } .sec-a { height: 141px; } .sec-s { height: 60px; }
.letter { width: 24px; flex: none; display: flex; align-items: center; justify-content: center; background: linear-gradient(90deg, #f2f2f2, #cfcfcf); color: #a8a8a8; font-size: 13px; }
.sec-s .letter { align-items: flex-end; padding-bottom: 10px; box-sizing: border-box; }
.sec-grid { display: grid; grid-template-columns: repeat(3, 28px); grid-auto-rows: 27.6px; padding-top: 1px; background: #fdfdfd; flex: 1; align-content: start; }
.sec-first .sec-grid { padding-top: 9px; }
.scell { display: flex; align-items: center; justify-content: center; }
.scur { background: linear-gradient(#f7d798, #f3a53c); outline: 1px solid #333; outline-offset: -1px; }
.vscroll { width: 15px; display: flex; flex-direction: column; margin: 5px 0 8px 9px; flex: none; }
.sb-btn { height: 15px; display: flex; align-items: center; justify-content: center; background: linear-gradient(90deg, #f4f4f4, #d8d8d8); border: 1px solid #c8c8c8; box-sizing: border-box; flex: none; }
.sb-track { flex: 1; background: linear-gradient(90deg, #e8e8e8, #f8f8f8); padding-top: 98px; box-sizing: border-box; display: flex; flex-direction: column; }
.sb-thumb { height: 157px; box-sizing: border-box; border: 1px solid #6d9fc0; border-radius: 2px; background: linear-gradient(90deg, #d8ecf8, #9ccbe4); display: flex; flex-direction: column; justify-content: center; align-items: center; gap: 1px; }
.sb-thumb i { width: 6px; height: 1px; background: #446; }

.view { flex: 1; min-width: 0; display: flex; flex-direction: column; position: relative; }
.view-title { height: 28px; background: linear-gradient(#95b6d2, #bcd2e6 60%, #dce8f2); display: flex; align-items: flex-start; justify-content: space-between; padding: 0 2px 0 5px; flex: none; }
.doc-ic { width: 9px; height: 9px; margin-top: 11px; border: 1px solid #555; border-top-width: 3px; box-sizing: border-box; background: #ddd; }
.view-band { height: 23px; background: #f4f4f4; flex: none; padding-left: 4px; display: flex; align-items: center; }
.band-ic { width: 13px; height: 13px; }
.win-btns { display: flex; margin-top: 11px; height: 15px; }
.wb { width: 28px; height: 15px; box-sizing: border-box; border: 1px solid #8b9aa8; display: flex; align-items: center; justify-content: center; background: #c0ccd8; margin-left: 1px; border-radius: 2px; }
.wb.closer { background: linear-gradient(#e49a88, #b5382a); color: #fff; font-size: 10px; font-weight: bold; }
.wmin { display: block; width: 10px; height: 3px; border: 1px solid #5c6c7c; box-sizing: border-box; background: #fff; }
.wrest { display: block; width: 9px; height: 8px; border: 1px solid #5c6c7c; box-sizing: border-box; }
.wrest.small { border-top-width: 2px; }
.canvas { flex: 1; background: #000; overflow: hidden; }
.cad { display: block; }

.rightbar { width: 33px; flex: none; background: linear-gradient(90deg, #fafafa, #e6e6e6); display: flex; flex-direction: column; align-items: center; padding-top: 3px; box-sizing: border-box; }
.rcell { height: 27.4px; display: flex; align-items: center; justify-content: center; flex: none; }
.rcell .ic { width: 22px; height: 22px; }
.rcell.c { height: 26px; }
.hgrip { width: 18px; height: 2px; background: repeating-linear-gradient(90deg, #999 0 2px, transparent 2px 4px); flex: none; margin: 1px 0 3px; }
.hsep { width: 28px; height: 1px; background: #bbb; margin: 3px 0; flex: none; }

.lower { flex: none; height: 34px; display: flex; }
.keyin { width: 289px; height: 33px; border-radius: 0 0 5px 0; padding-left: 2px; box-sizing: border-box; }
.field { border: 1px solid #a8a8a8; background: #fafafa; box-sizing: border-box; padding: 0 4px; display: flex; align-items: center; }
.field.key { width: 175px; height: 20px; }
.drop { width: 16px; height: 20px; margin: 0 8px 0 2px; border: 1px solid #999; background: #eee; box-sizing: border-box; display: flex; align-items: center; justify-content: center; }
.coords { flex: none; height: 33px; display: flex; background: #f0f0f0; }
.xy { display: flex; align-items: center; width: 360px; height: 100%; padding-left: 20px; box-sizing: border-box; background: linear-gradient(#f0f0f0, #dedede); }
.xy b { font-size: 15px; width: 17px; color: #111; }
.xy .yl { margin-left: 10px; width: 17px; }
.field.co { width: 135px; height: 16px; color: #999; font-size: 11px; }
.navs { height: 33px; width: 416px; background: linear-gradient(#f3f3f3, #d4d4d4); padding-left: 1px; border-radius: 0 0 4px 0; box-sizing: border-box; }
.navs .grip { margin-left: 2px; margin-right: 7px; }
.combo.vw { width: 125px; height: 20px; gap: 3px; margin-left: 3px; }
.vw .end { margin-left: auto; margin-right: 6px; }
.pages { display: flex; }
.pg { width: 13.5px; height: 20px; display: flex; align-items: center; justify-content: center; border-right: 1px solid #333; font-size: 12px; background: #f4f4f4; box-sizing: border-box; }
.pg:last-child { border-right: 0; }
.pg.on { background: linear-gradient(#f3a052, #fff1a0); }

.status { flex: none; height: 25px; display: flex; background: #f4f4f4; border-top: 1px solid #c8c8c8; box-sizing: border-box; font-size: 11px; letter-spacing: -.28px; }
.st { border-left: 1px solid #b8b8b8; display: flex; align-items: center; box-sizing: border-box; flex: none; padding-left: 1px; white-space: nowrap; }
.msg { width: 272px; border-left: 0; padding-left: 3px; }
.w248 { width: 248px; } .w28 { width: 28px; justify-content: center; } .w27 { width: 27px; } .w29 { width: 29px; justify-content: center; } .w103 { width: 103px; } .w166 { width: 166px; }

.taskbar { flex: none; height: 12px; background: linear-gradient(#454a50, #5a5e62); border-top: 1px solid #2c2e31; box-sizing: border-box; display: flex; padding-left: 72px; align-items: flex-start; color: #fff; position: relative; }
.orb { position: absolute; left: 10px; top: -4px; width: 40px; height: 40px; border-radius: 50%; background: radial-gradient(circle at 50% 60%, #6db2e0, #1a5a9c 70%); border: 1px solid #9ac; box-sizing: border-box; display: flex; justify-content: center; }
.flag { width: 16px; height: 16px; margin-top: 6px; background: conic-gradient(#6b3 0 25%, #fc3 0 50%, #38c 0 75%, #e53 0); border-radius: 3px; }
.ql { width: 16px; height: 10px; margin: 1px 6px 0 0; border: 1px solid #dde; box-sizing: border-box; background: #557; flex: none; }
.chev { width: 24px; font-size: 13px; line-height: 10px; flex: none; }
.tb { width: 153px; height: 11px; margin: 1px 2px 0 0; flex: none; background: linear-gradient(#7b7e80, #6b6f72); border: 1px solid #2c2e31; border-bottom: 0; box-sizing: border-box; border-radius: 2px 2px 0 0; display: flex; padding-left: 8px; gap: 6px; line-height: 18px; overflow: hidden; }
.tb.dark { background: #35383c; }
.tb-ic { width: 14px; height: 10px; flex: none; }
.green { background: linear-gradient(90deg, #e7c64a, #6dbb45); }
.blue { background: #2d57c2; border: 1px solid #cde; box-sizing: border-box; }
.orange { background: #f4a02e; }
.tray { margin-left: auto; padding-right: 4px; display: flex; gap: 3px; line-height: 18px; overflow: hidden; height: 11px; }
.vol { margin-left: 16px; margin-right: 4px; }

.lse {
  position: absolute; left: 158px; top: 12px; width: 372px; height: 438px; box-sizing: border-box;
  border: 1px solid #1d4f73; border-radius: 6px 6px 5px 5px;
  background: linear-gradient(#dbe7f1 0, #c8d9e6 8%, #8aa9bf 40%, #d0e0ec 70%, #2b7aa5 100%);
  box-shadow: 0 0 8px rgba(0, 0, 0, .55);
  padding: 0 5px 5px 6px; display: flex; flex-direction: column;
}
.lse-title { height: 24px; display: flex; align-items: center; flex: none; color: #222; font-size: 12px; letter-spacing: -.13px; background: linear-gradient(#e5edf4, #d9e5ee); margin: 0 -5px 0 -6px; padding: 0 5px 0 6px; border-radius: 6px 6px 0 0; }
.logo { width: 21px; height: 21px; margin-right: 1px; }
.lse-name { white-space: nowrap; }
.caption { margin-left: auto; display: flex; align-self: flex-start; height: 17px; border: 1px solid #8aa0b2; border-top: 0; border-radius: 0 0 4px 4px; overflow: hidden; box-sizing: border-box; }
.cap { width: 25px; display: flex; align-items: center; justify-content: center; background: #cfdde8; border-right: 1px solid #a0b4c4; }
.cap.red { width: 40px; background: linear-gradient(#ec9d8c, #bb3c2a); color: #fff; font-size: 11px; font-weight: bold; border-right: 0; }
.lse-body { flex: 1; min-height: 0; background: #f1f1f1; border: 1px solid #6a8498; display: flex; flex-direction: column; box-sizing: border-box; font-size: 11px; letter-spacing: -.22px; }
.lse-menu { height: 18px; flex: none; display: flex; align-items: center; gap: 16px; padding-left: 12px; background: #f5f5f5; border-bottom: 1px solid #e6e6e6; box-sizing: border-box; font-size: 12px; }
.lists { display: flex; gap: 9px; padding: 2px 0 0 12px; height: 119px; box-sizing: border-box; flex: none; }
.gcol { display: flex; flex-direction: column; }
.styles { width: 104px; } .comps { width: 221px; }
.legend { height: 15px; padding-left: 3px; line-height: 15px; flex: none; }
.comps .legend { padding-left: 1px; }
.listbox { height: 80px; margin-top: 1px; border: 1px solid #a8a8a8; box-sizing: border-box; display: flex; background: #fdfdfd; flex: none; }
.lb-main { flex: 1; min-width: 0; }
.lb-head { height: 18px; border-bottom: 2px solid #8f8f8f; box-sizing: border-box; display: flex; align-items: center; background: linear-gradient(#fafafa, #eee); }
.h-name { padding-left: 4px; }
.lb-row { height: 14.7px; line-height: 14.7px; padding-left: 2px; white-space: nowrap; }
.lb-head + .lb-row { margin-top: 1px; }
.lb-row.cur { background: #d5edf8; }
.cols { display: flex; padding-left: 0; }
.h0 { width: 13px; flex: none; }
.lb-head .h0 { border-right: 1px solid #bbb; height: 100%; }
.h1 { width: 62px; padding-left: 4px; box-sizing: border-box; flex: none; border-right: 1px solid #bbb; height: 100%; line-height: 16px; }
.h2 { padding-left: 4px; line-height: 16px; }
.c1 { width: 62px; padding-left: 4px; box-sizing: border-box; flex: none; }
.c2 { padding-left: 4px; }
.lb-sb { width: 17px; flex: none; display: flex; flex-direction: column; background: #f3f3f3; }
.sb-btn.s { height: 17px; border: 0; background: #f3f3f3; }
.sb-track.s { background: #f3f3f3; padding-top: 0; justify-content: center; }
.sb-thumb.gr { height: 32px; background: linear-gradient(90deg, #eee, #cfcfcf); border: 1px solid #a8a8a8; margin: 0 1px; }
.sb-thumb.gr.small { height: 12px; }
.field.tf { height: 18px; margin-top: 2px; padding-left: 4px; background: #fff; border-color: #c8c8c8; flex: none; }
.preview { height: 25px; background: #000; margin: 15px 8px 0 9px; flex: none; }
.stroke-box { margin: 17px 5px 0 6px; height: 71px; border: 1px solid #e8e8e8; box-sizing: border-box; padding: 6px 5px 0; flex: none; }
.stroke-top { display: flex; align-items: flex-start; }
.btn { height: 21px; border: 1px solid #707070; border-radius: 3px; background: linear-gradient(#f4f4f4, #ececec 50%, #d4d4d4); padding: 0; color: #222; box-sizing: border-box; cursor: default; }
.btn.base { width: 146px; margin-left: 1px; }
.stroke-name { margin-left: 7px; line-height: 11px; }
.strokebar { height: 11px; margin-top: 10px; border: 1px solid #aaa; box-sizing: border-box; background: #fafafa; width: 333px; overflow: hidden; flex: none; }
.strokefill { display: block; width: 249px; height: 100%; background: #000; }
.checks { display: grid; grid-template-columns: 148px 141px auto; margin-top: 4px; width: 333px; }
.chk { display: flex; align-items: center; gap: 7px; }
.box { display: block; width: 13px; height: 13px; border: 1px solid #a8a8a8; background: #f6f6f6; box-sizing: border-box; flex: none; }
.lower-form { display: flex; margin: 8px 0 0 6px; flex: none; height: 120px; }
.thumb { width: 101px; height: 119px; border: 1px solid #e8e8e8; box-sizing: border-box; flex: none; }
.form-side { margin-left: 8px; display: flex; flex-direction: column; width: 234px; }
.form { display: grid; grid-template-columns: 44px 62px 67px 61px; grid-auto-rows: 18.3px; align-items: center; color: #a6a6a6; margin-top: 6px; height: 93px; }
.lab { white-space: nowrap; justify-self: end; margin-right: 7px; }
.sel-d { height: 15px; border: 1px solid #bcbcbc; border-radius: 3px; box-sizing: border-box; display: flex; align-items: center; justify-content: space-between; padding: 0 5px 0 3px; background: #f4f4f4; }
.num-d { height: 16px; border: 2px solid #b8cbe0; box-sizing: border-box; display: flex; align-items: center; padding-left: 3px; background: #eff0f0; }
.tri.pale2 { border-top-color: #777; }
.lab-c { grid-column: 1 / span 2; display: flex; align-items: center; gap: 5px; padding-left: 7px; white-space: nowrap; }
.actions { display: flex; gap: 9px; margin-top: 1px; }
.actions .btn { width: 68px; height: 20px; }
.btn.off { color: #a8a8a8; border-color: #bcbcbc; background: #f4f4f4; }

.es-win { position: absolute; left: 585px; top: 21px; width: 235px; height: 108px; box-sizing: border-box; border: 1px solid #6b7a85; border-radius: 5px; background: linear-gradient(#eef1f4, #d4dde4 50%, #5c6a75); padding: 0 5px 5px 5px; display: flex; flex-direction: column; box-shadow: 0 0 4px rgba(0, 0, 0, .4); }
.es-title { height: 26px; display: flex; align-items: center; color: #444; font-size: 12px; letter-spacing: -.1px; flex: none; }
.es-name { white-space: nowrap; }
.es-ic { width: 16px; height: 16px; margin: 0 6px 0 2px; }
.es-btns { margin-left: auto; display: flex; align-self: flex-start; align-items: center; border: 1px solid #9aa6b0; border-top: 0; border-radius: 0 0 4px 4px; height: 16px; }
.es-btns .wmin, .es-btns .wrest { margin: 0 8px; }
.es-btns em { font-style: normal; font-size: 13px; width: 40px; text-align: center; color: #555; border-left: 1px solid #bbb; }
.es-body { flex: 1; background: #f2f2f2; border: 1px solid #55626c; box-sizing: border-box; display: flex; padding: 6px 0 0 21px; position: relative; }
.es-rows { display: flex; flex-direction: column; gap: 1px; width: 108px; flex: none; }
.es-row { display: flex; height: 25px; border-top: 1px solid #c8c8c8; border-left: 1px solid #aaa; padding-left: 2px; align-items: center; }
.cell.es { width: 21px; height: 21px; }
.cell.es .ic { width: 18px; height: 18px; }
.cell.es.sel { background: linear-gradient(135deg, #f7e0a8, #dca460); border: 1px solid #8e8e7a; }
.es-side { margin-left: 15px; display: flex; flex-direction: column; gap: 6px; padding-top: 1px; }
.es-tri { position: absolute; left: 183px; bottom: 17px; border-width: 5px 5px 0; border-top-color: #111; }
</style>
